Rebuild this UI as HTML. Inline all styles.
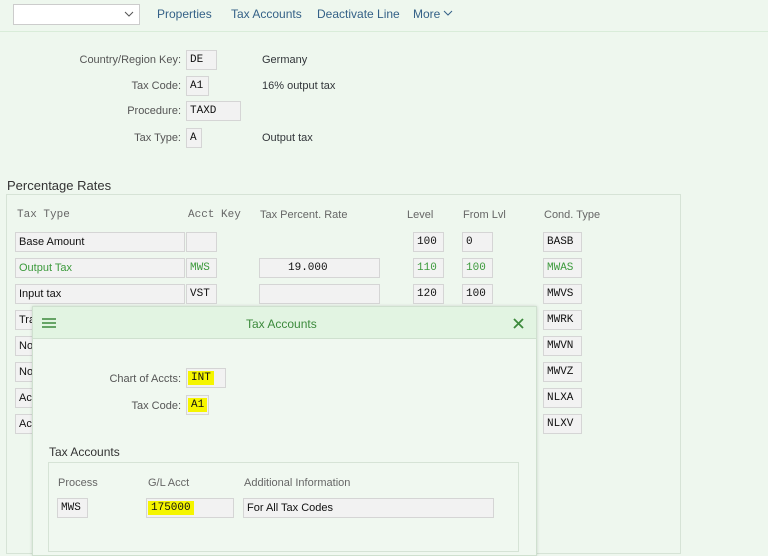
<!DOCTYPE html>
<html><head><meta charset="utf-8"><style>
*{box-sizing:border-box;margin:0;padding:0}
body{width:768px;height:542px;overflow:hidden;background:#eef7ee;font-family:"Liberation Sans",sans-serif;font-size:11px;color:#32363a;position:relative}
.a{position:absolute}
.tb{left:0;top:0;width:768px;height:32px;border-bottom:1px solid #d9ecd9;background:#eef7ee}
.lk{color:#346187;font-size:12px;top:7px}
.in{position:absolute;background:#f2f2f2;border:1px solid #d5d5d5;font-family:"Liberation Mono",monospace;font-size:11px;color:#111;padding-left:3px;line-height:19px;height:20px}
.s{font-family:"Liberation Sans",sans-serif}
.lb{position:absolute;text-align:right;color:#555;font-size:11px}
.g{color:#3c9a3c}
.hd{position:absolute;color:#666;font-size:11px;top:209px}
.hl{background:#f5f500;padding:1px 3px;margin-left:-2px}
</style></head><body>
<div class="a tb"></div>
<div class="a" style="left:13px;top:4px;width:127px;height:21px;background:#fff;border:1px solid #ccc"></div>
<svg class="a" style="left:124px;top:11px" width="10" height="7"><path d="M1 1L5 5L9 1" stroke="#555" fill="none"/></svg>
<div class="a lk" style="left:157px">Properties</div>
<div class="a lk" style="left:231px">Tax Accounts</div>
<div class="a lk" style="left:317px">Deactivate Line</div>
<div class="a lk" style="left:413px">More</div>
<svg class="a" style="left:443px;top:10px" width="10" height="7"><path d="M1 1L5 5L9 1" stroke="#346187" fill="none"/></svg>

<div class="lb" style="left:20px;top:54px;width:161px">Country/Region Key:</div>
<div class="in" style="left:186px;top:50px;width:31px">DE</div>
<div class="a" style="left:262px;top:54px">Germany</div>
<div class="lb" style="left:20px;top:80px;width:161px">Tax Code:</div>
<div class="in" style="left:186px;top:76px;width:23px">A1</div>
<div class="a" style="left:262px;top:80px">16% output tax</div>
<div class="lb" style="left:20px;top:105px;width:161px">Procedure:</div>
<div class="in" style="left:186px;top:101px;width:55px">TAXD</div>
<div class="lb" style="left:20px;top:132px;width:161px">Tax Type:</div>
<div class="in" style="left:186px;top:128px;width:16px">A</div>
<div class="a" style="left:262px;top:132px">Output tax</div>

<div class="a" style="left:7px;top:178px;font-size:13px;color:#333">Percentage Rates</div>
<div class="a" style="left:6px;top:194px;width:675px;height:360px;border:1px solid #d6e3d6"></div>
<div class="hd" style="left:17px;font-family:'Liberation Mono',monospace">Tax Type</div>
<div class="hd" style="left:188px;font-family:'Liberation Mono',monospace">Acct Key</div>
<div class="hd" style="left:260px">Tax Percent. Rate</div>
<div class="hd" style="left:407px">Level</div>
<div class="hd" style="left:463px">From Lvl</div>
<div class="hd" style="left:544px">Cond. Type</div>

<div class="in s" style="left:15px;top:232px;width:170px">Base Amount</div>
<div class="in" style="left:186px;top:232px;width:31px"></div>
<div class="in" style="left:413px;top:232px;width:31px">100</div>
<div class="in" style="left:462px;top:232px;width:31px">0</div>
<div class="in" style="left:543px;top:232px;width:39px">BASB</div>

<div class="in s g" style="left:15px;top:258px;width:170px">Output Tax</div>
<div class="in g" style="left:186px;top:258px;width:31px">MWS</div>
<div class="in" style="left:259px;top:258px;width:121px;padding-left:28px">19.000</div>
<div class="in g" style="left:413px;top:258px;width:31px">110</div>
<div class="in g" style="left:462px;top:258px;width:31px">100</div>
<div class="in g" style="left:543px;top:258px;width:39px">MWAS</div>

<div class="in s" style="left:15px;top:284px;width:170px">Input tax</div>
<div class="in" style="left:186px;top:284px;width:31px">VST</div>
<div class="in" style="left:259px;top:284px;width:121px"></div>
<div class="in" style="left:413px;top:284px;width:31px">120</div>
<div class="in" style="left:462px;top:284px;width:31px">100</div>
<div class="in" style="left:543px;top:284px;width:39px">MWVS</div>

<div class="in s" style="left:15px;top:310px;width:40px">Tra</div>
<div class="in s" style="left:15px;top:336px;width:40px">No</div>
<div class="in s" style="left:15px;top:362px;width:40px">No</div>
<div class="in s" style="left:15px;top:388px;width:40px">Ac</div>
<div class="in s" style="left:15px;top:414px;width:40px">Ac</div>
<div class="in" style="left:543px;top:310px;width:39px">MWRK</div>
<div class="in" style="left:543px;top:336px;width:39px">MWVN</div>
<div class="in" style="left:543px;top:362px;width:39px">MWVZ</div>
<div class="in" style="left:543px;top:388px;width:39px">NLXA</div>
<div class="in" style="left:543px;top:414px;width:39px">NLXV</div>

<div class="a" style="left:32px;top:306px;width:505px;height:250px;background:#f0f8f0;border:1px solid #cfe0cf;box-shadow:0 0 3px rgba(0,0,0,.15)"></div>
<div class="a" style="left:33px;top:307px;width:503px;height:32px;background:#e2f4e2;border-bottom:1px solid #cfe0cf"></div>
<svg class="a" style="left:42px;top:317px" width="14" height="12"><path d="M0 2H14M0 6H14M0 10H14" stroke="#3c8a3c" stroke-width="1.6"/></svg>
<div class="a" style="left:246px;top:317px;font-size:12px;color:#3c8a3c">Tax Accounts</div>
<svg class="a" style="left:513px;top:318px" width="11" height="11"><path d="M1 1L10 10M10 1L1 10" stroke="#3c8a3c" stroke-width="1.8"/></svg>

<div class="lb" style="left:60px;top:373px;width:121px">Chart of Accts:</div>
<div class="in" style="left:186px;top:368px;width:40px"><span class="hl">INT</span></div>
<div class="lb" style="left:60px;top:400px;width:121px">Tax Code:</div>
<div class="in" style="left:186px;top:395px;width:23px"><span class="hl">A1</span></div>

<div class="a" style="left:49px;top:445px;font-size:12px;color:#333">Tax Accounts</div>
<div class="a" style="left:48px;top:462px;width:471px;height:90px;border:1px solid #d6e3d6"></div>
<div class="a" style="left:58px;top:477px;color:#666">Process</div>
<div class="a" style="left:148px;top:477px;color:#666">G/L Acct</div>
<div class="a" style="left:244px;top:477px;color:#666">Additional Information</div>
<div class="in" style="left:57px;top:498px;width:31px">MWS</div>
<div class="in" style="left:146px;top:498px;width:88px"><span class="hl">175000</span></div>
<div class="in s" style="left:243px;top:498px;width:251px">For All Tax Codes</div>
</body></html>
